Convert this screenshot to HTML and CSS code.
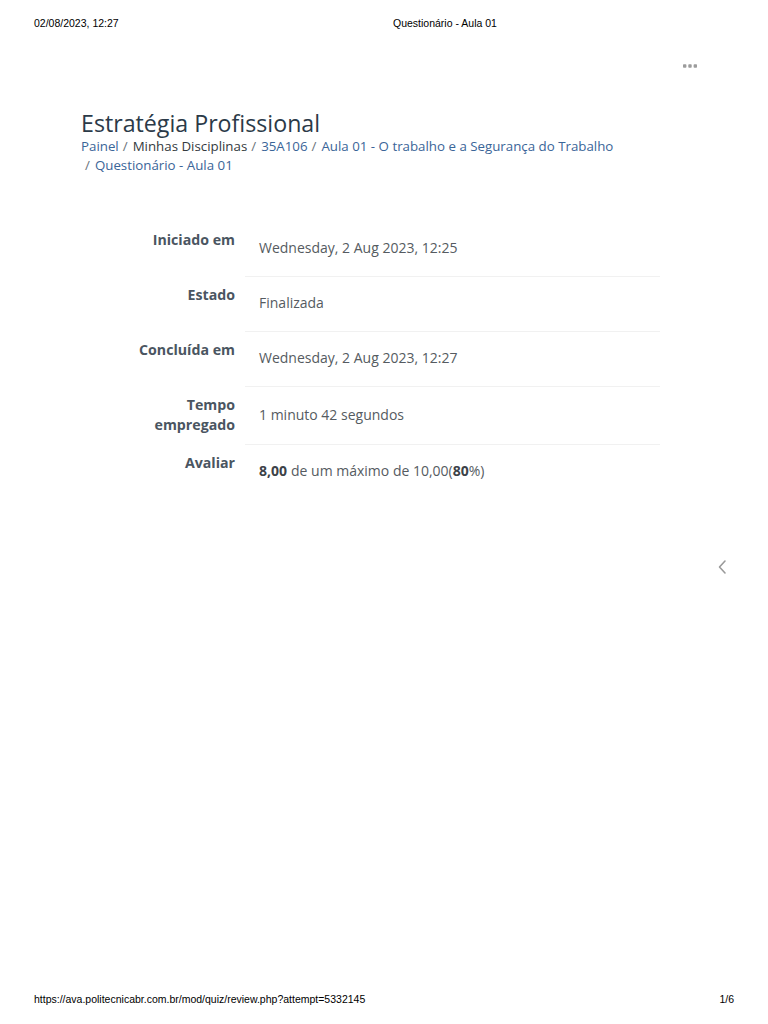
FILE: index.html
```html
<!DOCTYPE html>
<html lang="pt-BR">
<head>
<meta charset="utf-8">
<title>Questionário - Aula 01</title>
<link rel="stylesheet" href="styles.css">
</head>
<body>
<div class="sheet">
  <header class="print-header">
    <span class="ph-date">02/08/2023, 12:27</span>
    <span class="ph-title">Questionário - Aula 01</span>
  </header>

  <main class="page">
    <div class="toolbar">
      <span class="menu-dots" aria-label="Menu">
        <svg width="14" height="4" viewBox="0 0 14 4"><rect x="0" y="0.3" width="3.4" height="3.4" rx="0.8"/><rect x="5.3" y="0.3" width="3.4" height="3.4" rx="0.8"/><rect x="10.6" y="0.3" width="3.4" height="3.4" rx="0.8"/></svg>
      </span>
    </div>

    <h1 class="course-title">Estratégia Profissional</h1>
    <nav class="breadcrumb">
      <a class="crumb link first" href="#">Painel</a>
      <span class="crumb plain">Minhas Disciplinas</span>
      <a class="crumb link" href="#">35A106</a>
      <a class="crumb link" href="#">Aula 01 - O trabalho e a Segurança do Trabalho</a>
      <a class="crumb link" href="#">Questionário - Aula 01</a>
    </nav>

    <div class="summary">
      <div class="row first-row">
        <div class="label">Iniciado em</div>
        <div class="value">Wednesday, 2 Aug 2023, 12:25</div>
      </div>
      <div class="row">
        <div class="label">Estado</div>
        <div class="value">Finalizada</div>
      </div>
      <div class="row">
        <div class="label">Concluída em</div>
        <div class="value">Wednesday, 2 Aug 2023, 12:27</div>
      </div>
      <div class="row">
        <div class="label">Tempo<br>empregado</div>
        <div class="value">1 minuto 42 segundos</div>
      </div>
      <div class="row">
        <div class="label">Avaliar</div>
        <div class="value"><b>8,00</b> de um máximo de 10,00(<b>80</b>%)</div>
      </div>
    </div>

    <span class="drawer-toggle" aria-label="Abrir">
      <svg width="10" height="16" viewBox="0 0 10 16"><path d="M8 2 L2.5 8 L8 14" fill="none" stroke="#9a9a9a" stroke-width="1.6" stroke-linecap="round" stroke-linejoin="round"/></svg>
    </span>
  </main>

  <footer class="print-footer">
    <span class="pf-url">https://ava.politecnicabr.com.br/mod/quiz/review.php?attempt=5332145</span>
    <span class="pf-page">1/6</span>
  </footer>
</div>
</body>
</html>
```

FILE: styles.css
```css
* { box-sizing: border-box; }

html, body {
  margin: 0;
  padding: 0;
  background: #fff;
}

.sheet {
  width: 768px;
  min-height: 1024px;
  display: flex;
  flex-direction: column;
  position: relative;
}

.print-header,
.print-footer {
  font-family: "Liberation Sans", Arial, sans-serif;
  font-size: 10.5px;
  color: #000;
  display: flex;
  align-items: center;
  padding: 0 34px;
}

.print-header {
  height: 46px;
}

.ph-date {
  width: 359px;
}

.print-footer {
  height: 50px;
  justify-content: space-between;
}

.page {
  flex: 1;
  position: relative;
  padding-left: 81px;
  font-family: "Open Sans", "Noto Sans", sans-serif;
}

.toolbar {
  height: 40px;
  display: flex;
  justify-content: flex-end;
  align-items: center;
  padding-right: 71px;
}

.menu-dots svg {
  display: block;
  fill: #9c9c9c;
}

.course-title {
  margin: 24px 0 0;
  font-size: 23.2px;
  font-weight: 400;
  line-height: 27px;
  color: #2b3a48;
}

.breadcrumb {
  width: 620px;
  display: flex;
  flex-wrap: wrap;
  font-size: 13.3px;
  line-height: 19px;
}

.crumb {
  text-decoration: none;
  white-space: nowrap;
}

.crumb::before {
  content: "/";
  color: #6a737b;
  padding: 0 5px 0 4px;
}

.crumb.first::before {
  content: none;
}

.crumb.link {
  color: #3a6598;
}

.crumb.plain {
  color: #343a40;
}

.summary {
  margin-top: 46px;
  width: 579px;
}

.row {
  display: grid;
  grid-template-columns: 164px 1fr;
}

.label {
  align-self: start;
  text-align: right;
  padding: 9px 10px 9px 0;
  font-size: 14.2px;
  font-weight: 700;
  line-height: 20px;
  color: #4a5561;
}

.value {
  align-self: stretch;
  display: flex;
  align-items: center;
  padding: 16px 0 18px 14px;
  font-size: 14px;
  line-height: 20px;
  color: #555b61;
  border-top: 1px solid #f1f1f1;
}

.first-row .value {
  border-top: none;
  padding-top: 17px;
}

.value b {
  font-weight: 700;
  color: #3c4248;
  margin-right: 4px;
}

.value b:last-child {
  margin-right: 0;
}

.drawer-toggle {
  position: absolute;
  left: 717px;
  top: 513px;
}

.drawer-toggle svg {
  display: block;
}
```
